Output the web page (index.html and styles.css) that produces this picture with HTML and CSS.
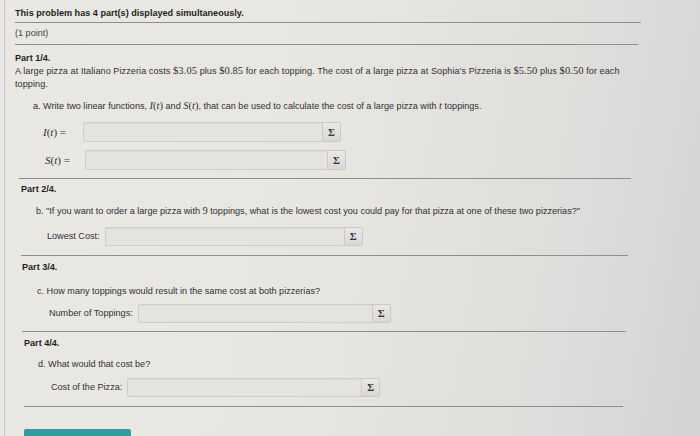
FILE: index.html
```html
<!DOCTYPE html>
<html>
<head>
<meta charset="utf-8">
<link rel="stylesheet" href="styles.css">
</head>
<body>
<div class="page">
  <header class="problem-head">This problem has 4 part(s) displayed simultaneously.</header>
  <div class="points">(1 point)</div>

  <section class="part part-1">
    <h3 class="part-title">Part 1/4.</h3>
    <p class="stem">A large pizza at Italiano Pizzeria costs <span class="num">$3.05</span> plus <span class="num">$0.85</span> for each topping. The cost of a large pizza at Sophia's Pizzeria is <span class="num">$5.50</span> plus <span class="num">$0.50</span> for each topping.</p>
    <p class="question">a. Write two linear functions, <span class="math"><i>I</i>(<i>t</i>)</span> and <span class="math"><i>S</i>(<i>t</i>)</span>, that can be used to calculate the cost of a large pizza with <i class="math">t</i> toppings.</p>
    <div class="answer-row row-i">
      <span class="label math"><i>I</i>(<i>t</i>) =</span>
      <div class="field"><span class="box"></span><span class="sigma">Σ</span></div>
    </div>
    <div class="answer-row row-s">
      <span class="label math"><i>S</i>(<i>t</i>) =</span>
      <div class="field"><span class="box"></span><span class="sigma">Σ</span></div>
    </div>
  </section>

  <section class="part part-2">
    <h3 class="part-title">Part 2/4.</h3>
    <p class="question">b. "If you want to order a large pizza with <span class="num">9</span> toppings, what is the lowest cost you could pay for that pizza at one of these two pizzerias?"</p>
    <div class="answer-row">
      <span class="label">Lowest Cost:</span>
      <div class="field"><span class="box"></span><span class="sigma">Σ</span></div>
    </div>
  </section>

  <section class="part part-3">
    <h3 class="part-title">Part 3/4.</h3>
    <p class="question">c. How many toppings would result in the same cost at both pizzerias?</p>
    <div class="answer-row">
      <span class="label">Number of Toppings:</span>
      <div class="field"><span class="box"></span><span class="sigma">Σ</span></div>
    </div>
  </section>

  <section class="part part-4">
    <h3 class="part-title">Part 4/4.</h3>
    <p class="question">d. What would that cost be?</p>
    <div class="answer-row">
      <span class="label">Cost of the Pizza:</span>
      <div class="field"><span class="box"></span><span class="sigma">Σ</span></div>
    </div>
  </section>

  <div class="help-btn">Help Entering Answers</div>
</div>
</body>
</html>
```

FILE: styles.css
```css
html, body {
  margin: 0;
  padding: 0;
  height: 100%;
  overflow: hidden;
}
body {
  background: linear-gradient(100deg, #e9e8e4 0%, #e7e6e1 45%, #dfdddb 80%, #d3d1d4 100%);
  font-family: "Liberation Sans", Arial, sans-serif;
  font-size: 9.1px;
  line-height: 13px;
  color: #303032;
}
.page {
  border-left: 1px solid #c9c8c6;
  margin-left: 4px;
  height: 436px;
  padding-top: 7px;
  box-sizing: border-box;
}
.problem-head {
  font-weight: bold;
  margin-left: 10px;
  width: 626px;
  padding-bottom: 2px;
  border-bottom: 1.5px solid #8f8e8e;
  color: #1e1e20;
}
.points {
  margin-left: 10px;
  width: 623px;
  padding-top: 4px;
  padding-bottom: 4px;
  border-bottom: 1.5px solid #8f8e8e;
  color: #444;
}
.part {
  border-bottom: 1.5px solid #8f8e8e;
}
.part-1 { margin-left: 14px; width: 612px; padding-top: 7px; padding-bottom: 8px; }
.part-2 { margin-left: 16px; width: 607px; padding-top: 4px; padding-bottom: 9px; }
.part-3 { margin-left: 17px; width: 604px; padding-top: 5px; padding-bottom: 8px; }
.part-4 { margin-left: 19px; width: 599px; padding-top: 5px; padding-bottom: 9px; }
.part-1 .part-title, .part-1 .stem { margin-left: -4px; margin-right: -8px; }
.stem { margin: 0; letter-spacing: 0.07px; }
.part-title {
  margin: 0;
  font-size: 9.1px;
  font-weight: bold;
  color: #1e1e20;
}
.num {
  font-family: "Liberation Serif", "Times New Roman", serif;
  font-size: 10.5px;
  line-height: 12px;
}
.math {
  font-family: "Liberation Serif", "Times New Roman", serif;
  font-size: 10.5px;
  line-height: 12px;
}
.question {
  margin: 9px 0 0 14px;
}
.part-2 .question { margin-left: 15px; }
.part-3 .question { margin-left: 15px; margin-top: 11px; }
.part-4 .question { margin-left: 14px; margin-top: 8px; }
.answer-row {
  display: flex;
  align-items: center;
  margin-left: 26px;
  margin-top: 9px;
}
.row-i { margin-left: 24px; }
.row-s { margin-top: 8px; margin-left: 26px; }
.part-3 .answer-row { margin-left: 27px; margin-top: 6px; }
.part-4 .answer-row { margin-left: 27px; margin-top: 7px; }
.label {
  margin-right: 5px;
  color: #333;
}
.row-i .label, .row-s .label { width: 40px; margin-right: 0; font-size: 11px; }
.field {
  display: flex;
  height: 19px;
}
.row-i .field, .row-s .field { height: 20px; }
.box {
  width: 238px;
  border: 1px solid #cfcdca;
  border-right: none;
  border-radius: 2px 0 0 2px;
  background: #e4e3df;
  box-shadow: inset 0 1px 1px rgba(0,0,0,0.04);
}
.row-s .box { width: 241px; }
.part-3 .box, .part-4 .box { width: 233px; }
.sigma {
  width: 17px;
  display: flex;
  align-items: center;
  justify-content: center;
  border: 1px solid #cbc9c7;
  border-radius: 0 2px 2px 0;
  background: linear-gradient(#e9e8e6, #d9d8d6);
  font-family: "Liberation Serif", "Times New Roman", serif;
  font-weight: bold;
  font-size: 10.5px;
  color: #333;
}
.help-btn {
  margin: 22px 0 0 19px;
  width: 107px;
  height: 20px;
  border-radius: 2px;
  background: #2b9ea0;
  color: #fff;
  font-size: 9.1px;
  text-align: center;
  padding-top: 8px;
  line-height: 13px;
}
```
